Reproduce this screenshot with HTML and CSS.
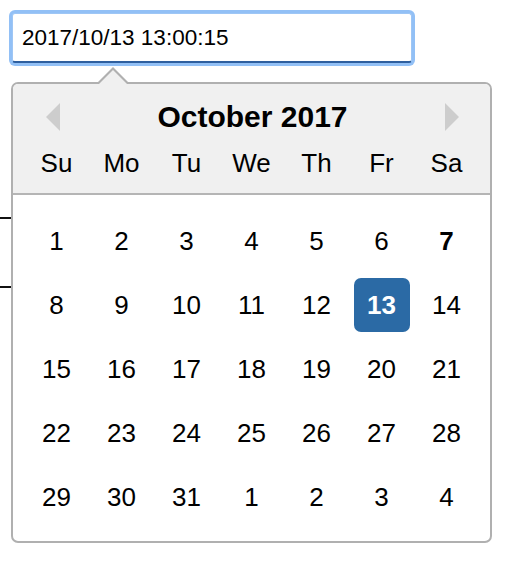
FILE: index.html
```html
<!DOCTYPE html>
<html>
<head>
<meta charset="utf-8">
<link rel="stylesheet" href="styles.css">
</head>
<body>
<div class="field">2017/10/13 13:00:15</div>
<div class="underlay"></div>
<div class="popup">
  <div class="caret"></div>
  <div class="head">
    <div class="title-row">
      <span class="nav prev"></span>
      <span class="title">October 2017</span>
      <span class="nav next"></span>
    </div>
    <div class="grid names">
      <span>Su</span><span>Mo</span><span>Tu</span><span>We</span><span>Th</span><span>Fr</span><span>Sa</span>
    </div>
  </div>
  <div class="grid days">
    <span>1</span><span>2</span><span>3</span><span>4</span><span>5</span><span>6</span><span class="today">7</span>
    <span>8</span><span>9</span><span>10</span><span>11</span><span>12</span><span class="sel">13</span><span>14</span>
    <span>15</span><span>16</span><span>17</span><span>18</span><span>19</span><span>20</span><span>21</span>
    <span>22</span><span>23</span><span>24</span><span>25</span><span>26</span><span>27</span><span>28</span>
    <span>29</span><span>30</span><span>31</span><span>1</span><span>2</span><span>3</span><span>4</span>
  </div>
</div>
</body>
</html>
```
FILE: styles.css
```css
html, body {
  margin: 0;
  padding: 0;
  background: #fff;
}
body {
  position: relative;
  width: 508px;
  height: 562px;
  overflow: hidden;
  font-family: "Liberation Sans", Arial, sans-serif;
  color: #000;
}
.field {
  box-sizing: border-box;
  margin: 13px 0 0 12px;
  width: 400px;
  height: 50px;
  border: 1px solid #9ec6f5;
  border-bottom: 2px solid #2e5f9f;
  border-radius: 3px;
  box-shadow: 0 0 0 3px #92c0f6;
  padding-left: 9px;
  display: flex;
  align-items: center;
  font-size: 22.5px;
  background: #fff;
}
.underlay {
  margin-top: 154px;
  width: 200px;
  height: 67px;
  border-top: 2px solid #111;
  border-bottom: 2px solid #111;
}
.popup {
  position: absolute;
  left: 11px;
  top: 82px;
  box-sizing: border-box;
  width: 481px;
  height: 461px;
  border: 2px solid #b0b0b0;
  border-radius: 7px;
  background: #fff;
}
.caret::before,
.caret::after {
  content: "";
  position: absolute;
  width: 0;
  height: 0;
}
.caret::before {
  left: 83px;
  top: -17px;
  border-left: 17px solid transparent;
  border-right: 17px solid transparent;
  border-bottom: 17px solid #b0b0b0;
}
.caret::after {
  left: 86px;
  top: -14px;
  border-left: 14px solid transparent;
  border-right: 14px solid transparent;
  border-bottom: 14px solid #f0f0f0;
}
.head {
  background: #f0f0f0;
  border-radius: 5px 5px 0 0;
  border-bottom: 2px solid #b5b5b5;
  padding: 10px 11px 7px;
}
.title-row {
  height: 46px;
  display: flex;
  align-items: center;
  justify-content: space-between;
  padding: 0 20px 0 22px;
}
.title {
  font-weight: bold;
  font-size: 30px;
}
.nav {
  width: 0;
  height: 0;
  border-top: 14px solid transparent;
  border-bottom: 14px solid transparent;
}
.prev {
  border-right: 14px solid #cdcdcd;
}
.next {
  border-left: 14px solid #cdcdcd;
}
.grid {
  display: grid;
  grid-template-columns: repeat(7, 65px);
  justify-items: center;
  align-items: center;
  font-size: 26px;
}
.names {
  grid-auto-rows: 46px;
}
.days {
  grid-auto-rows: 64px;
  padding: 14px 11px 12px;
}
.today {
  font-weight: bold;
}
.sel {
  width: 56px;
  height: 54px;
  border-radius: 7px;
  background: #2b6aa5;
  color: #fff;
  font-weight: bold;
  display: flex;
  align-items: center;
  justify-content: center;
}
```
